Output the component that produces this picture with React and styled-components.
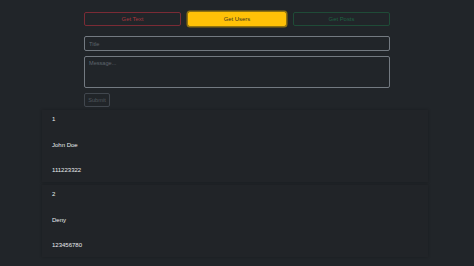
import { styled, createGlobalStyle } from 'styled-components'

const GlobalStyle = createGlobalStyle`
  html, body {
    margin: 0;
    padding: 0;
    background: #212529;
    font-family: "Liberation Sans", Arial, sans-serif;
  }
`

const Page = styled.div`
  width: 474px;
  height: 266px;
  overflow: hidden;
  padding-top: 12px;
  box-sizing: border-box;
`

const Form = styled.div`
  width: 306px;
  margin: 0 auto;
  display: flex;
  flex-direction: column;
`

const ButtonRow = styled.div`
  display: grid;
  grid-template-columns: 97px 98px 97px;
  justify-content: space-between;
  margin-bottom: 10px;
`

const tones = {
  danger: { border: '#7a2b35', color: '#a8353f', bg: 'transparent' },
  warning: { border: '#ffc107', color: '#3a3220', bg: '#ffc107' },
  success: { border: '#1f4b37', color: '#1e6443', bg: 'transparent' },
}

const ActionButton = styled.button`
  height: 14px;
  padding: 0;
  border: 1px solid ${(p) => tones[p.$tone].border};
  border-radius: 2px;
  background: ${(p) => tones[p.$tone].bg};
  color: ${(p) => tones[p.$tone].color};
  font-family: inherit;
  font-size: 5.9px;
  box-shadow: ${(p) => (p.$active ? '0 0 0 1.5px rgba(180, 140, 10, 0.75)' : 'none')};
`

const Field = styled.input`
  height: 15px;
  box-sizing: border-box;
  border: 1px solid #737a81;
  border-radius: 2px;
  background: #212529;
  color: #dee2e6;
  padding: 0 4px;
  font-family: inherit;
  font-size: 5.6px;
  margin-bottom: 5px;
  outline: none;

  &::placeholder {
    color: #5f666d;
  }
`

const Area = styled.textarea`
  height: 32px;
  box-sizing: border-box;
  border: 1px solid #737a81;
  border-radius: 2px;
  background: #212529;
  color: #dee2e6;
  padding: 3px 4px;
  font-family: inherit;
  font-size: 5.6px;
  resize: none;
  margin: 0 0 5px;
  outline: none;

  &::placeholder {
    color: #5f666d;
  }
`

const SubmitButton = styled.button`
  align-self: flex-start;
  width: 26px;
  height: 14px;
  padding: 0;
  border: 1px solid #41474e;
  border-radius: 2px;
  background: transparent;
  color: #51585f;
  font-family: inherit;
  font-size: 5.6px;
`

const List = styled.div`
  width: 386px;
  margin: 3px 0 0 42px;
  display: flex;
  flex-direction: column;
  gap: 3px;
`

const Card = styled.div`
  background: #212428;
  padding: 5px 10px 8px;
  box-shadow: 0 0 3px rgba(0, 0, 0, 0.25);
`

const Line = styled.p`
  margin: 0;
  height: 8px;
  line-height: 8px;
  font-size: 6px;
  color: #e9ecef;

  & + & {
    margin-top: 17.5px;
  }
`

const users = [
  { id: 1, name: 'John Doe', phone: '111223322' },
  { id: 2, name: 'Deny', phone: '123456780' },
]

export default function App() {
  return (
    <>
      <GlobalStyle />
      <Page>
        <Form>
          <ButtonRow>
            <ActionButton $tone="danger">Get Text</ActionButton>
            <ActionButton $tone="warning" $active>Get Users</ActionButton>
            <ActionButton $tone="success">Get Posts</ActionButton>
          </ButtonRow>
          <Field placeholder="Title" />
          <Area placeholder="Message..." />
          <SubmitButton disabled>Submit</SubmitButton>
        </Form>
        <List>
          {users.map((u) => (
            <Card key={u.id}>
              <Line>{u.id}</Line>
              <Line>{u.name}</Line>
              <Line>{u.phone}</Line>
            </Card>
          ))}
        </List>
      </Page>
    </>
  )
}
